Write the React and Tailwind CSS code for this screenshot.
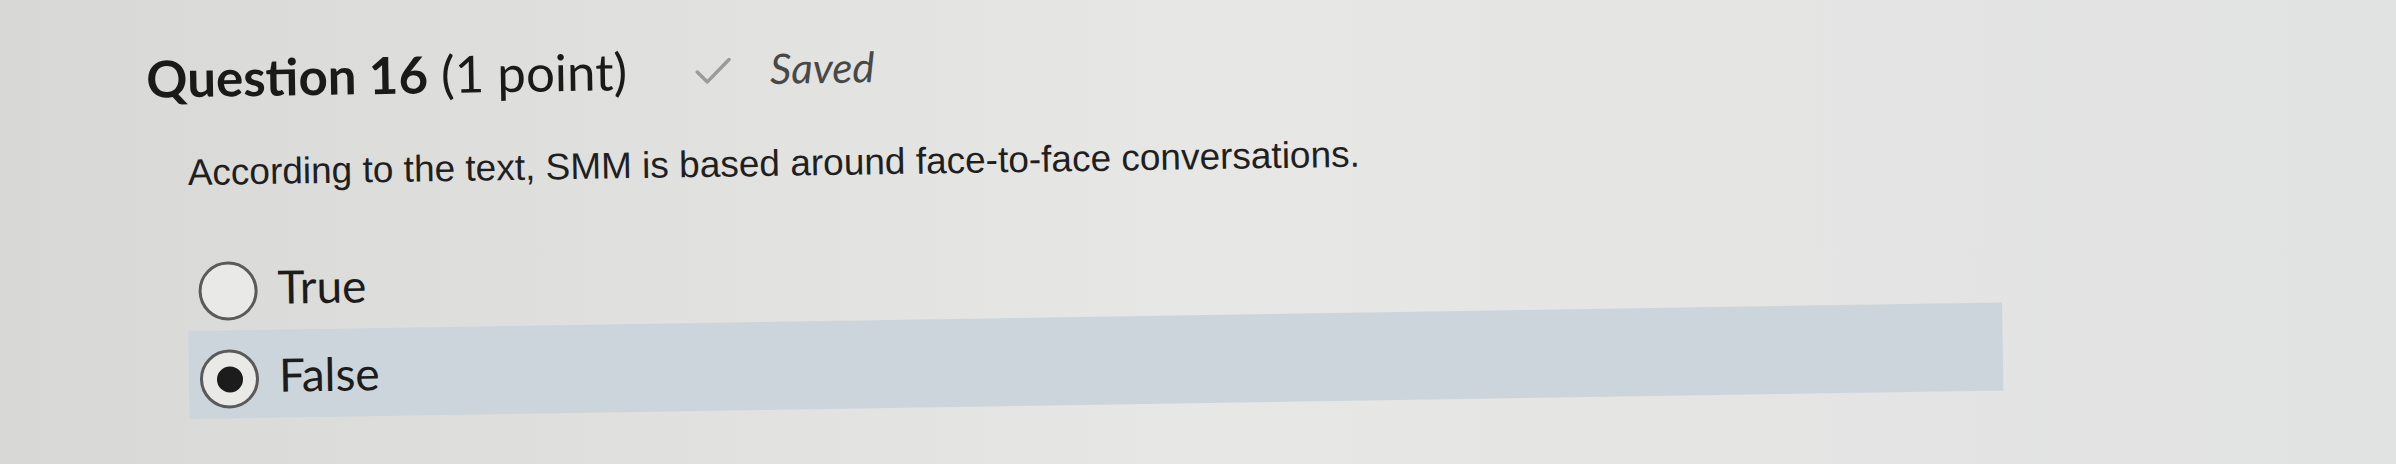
import { useState } from "react";

function SavedCheck() {
  return (
    <svg width="38" height="28" viewBox="0 0 38 28" fill="none" className="mt-[2px]">
      <path d="M3 15 L13 25 L35 3" stroke="#9b9b9b" strokeWidth="3.5" strokeLinecap="round" strokeLinejoin="round" />
    </svg>
  );
}

function Radio({ checked }) {
  return (
    <span className="mt-[9px] w-[59px] h-[59px] shrink-0 rounded-full border-[3px] border-[#5a5a5a] bg-[#e9e9e7] flex items-center justify-center">
      {checked && <span className="w-[26px] h-[26px] rounded-full bg-[#1c1c1c]" />}
    </span>
  );
}

export default function App() {
  const [answer, setAnswer] = useState("false");
  const options = [
    { value: "true", label: "True" },
    { value: "false", label: "False" },
  ];

  return (
    <div className="w-[2396px] h-[464px] overflow-hidden bg-linear-to-r from-[#d8d8d6] via-[#e7e7e5] to-[#e1e2e2]">
      <div className="origin-top-left -rotate-[0.9deg] pl-[145px] pt-[49px]">
        {/* header */}
        <div className="flex items-center font-['Lato',sans-serif] text-[#1a1a1a]">
          <h2 className="text-[51px] leading-[60px]">
            <span className="font-bold">Question 16</span> <span>(1 point)</span>
          </h2>
          <div className="flex items-center gap-[38px] ml-[67px] text-[#484848]">
            <SavedCheck />
            <span className="italic text-[42px]">Saved</span>
          </div>
        </div>

        {/* prompt */}
        <p className="mt-[42px] ml-[40px] font-['Liberation_Sans',Arial,sans-serif] text-[37px] leading-[44px] text-[#1f1f1f]">
          According to the text, SMM is based around face-to-face conversations.
        </p>

        {/* answers */}
        <div className="mt-[48px] ml-[38px] w-[1814px]">
          {options.map((o) => (
            <button
              key={o.value}
              type="button"
              onClick={() => setAnswer(o.value)}
              className={`w-full h-[88px] flex items-center gap-[20px] pl-[11px] text-left ${
                answer === o.value ? "bg-[#ccd5db]" : ""
              }`}
            >
              <Radio checked={answer === o.value} />
              <span className="font-['Lato',sans-serif] text-[46px] text-[#1c1c1c]">{o.label}</span>
            </button>
          ))}
        </div>
      </div>
    </div>
  );
}
